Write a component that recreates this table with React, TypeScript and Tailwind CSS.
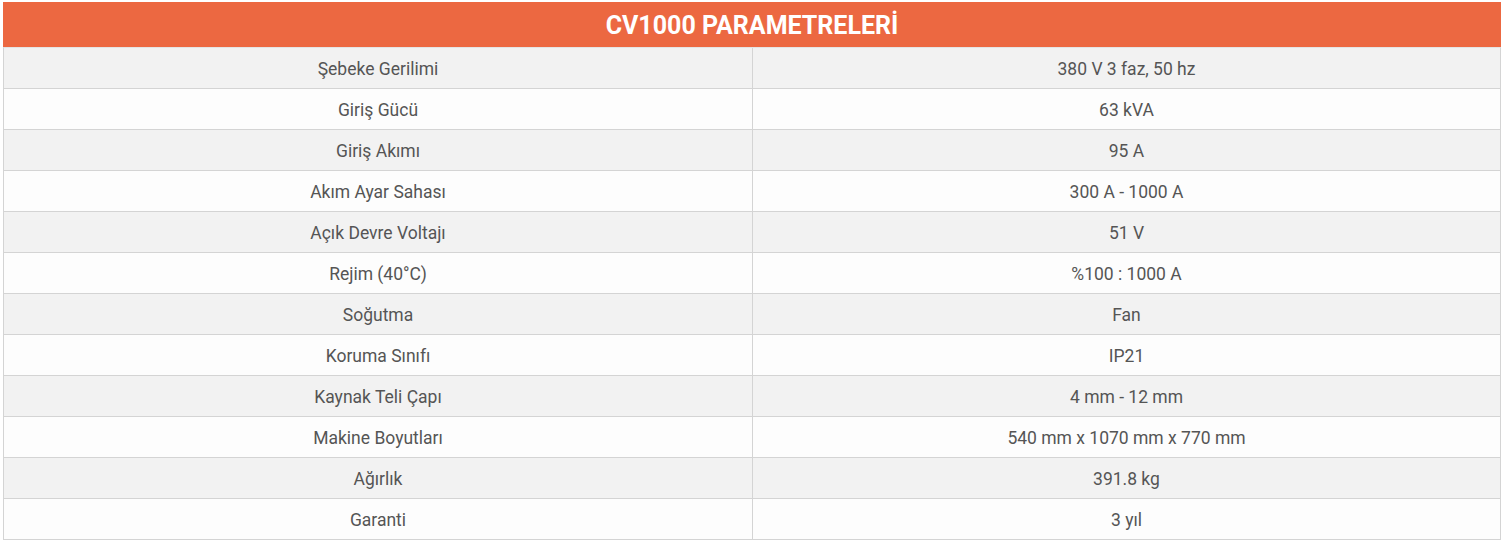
import React from "react";

const rows: [string, string][] = [
  ["Şebeke Gerilimi", "380 V 3 faz, 50 hz"],
  ["Giriş Gücü", "63 kVA"],
  ["Giriş Akımı", "95 A"],
  ["Akım Ayar Sahası", "300 A - 1000 A"],
  ["Açık Devre Voltajı", "51 V"],
  ["Rejim (40°C)", "%100 : 1000 A"],
  ["Soğutma", "Fan"],
  ["Koruma Sınıfı", "IP21"],
  ["Kaynak Teli Çapı", "4 mm - 12 mm"],
  ["Makine Boyutları", "540 mm x 1070 mm x 770 mm"],
  ["Ağırlık", "391.8 kg"],
  ["Garanti", "3 yıl"],
];

export default function App() {
  return (
    <div className="w-[1501px] h-[544px] bg-white pt-[2px] pl-[3px] font-['Roboto',sans-serif]">
      <div className="w-[1498px]">
        <div className="h-[45px] bg-[#ec6841] flex items-center justify-center pt-[2px] text-white font-bold text-[25px] leading-none">
          CV1000 PARAMETRELERİ
        </div>
        <div className="border-l border-r border-t border-[#e4e4e4] border-l-[#d4d4d4] border-r-[#d4d4d4]">
          {rows.map(([k, v], i) => (
            <div
              key={k}
              className={
                i % 2 === 0
                  ? "grid grid-cols-[749px_1fr] h-[41px] border-b border-[#d4d4d4] bg-[#f2f2f2]"
                  : "grid grid-cols-[749px_1fr] h-[41px] border-b border-[#d4d4d4] bg-[#fdfdfd]"
              }
            >
              <div className="flex items-center justify-center pt-[4px] border-r border-[#d4d4d4] text-[17.5px] leading-none text-[#555555]">
                {k}
              </div>
              <div className="flex items-center justify-center pt-[4px] text-[17.5px] leading-none text-[#555555]">
                {v}
              </div>
            </div>
          ))}
        </div>
      </div>
    </div>
  );
}
